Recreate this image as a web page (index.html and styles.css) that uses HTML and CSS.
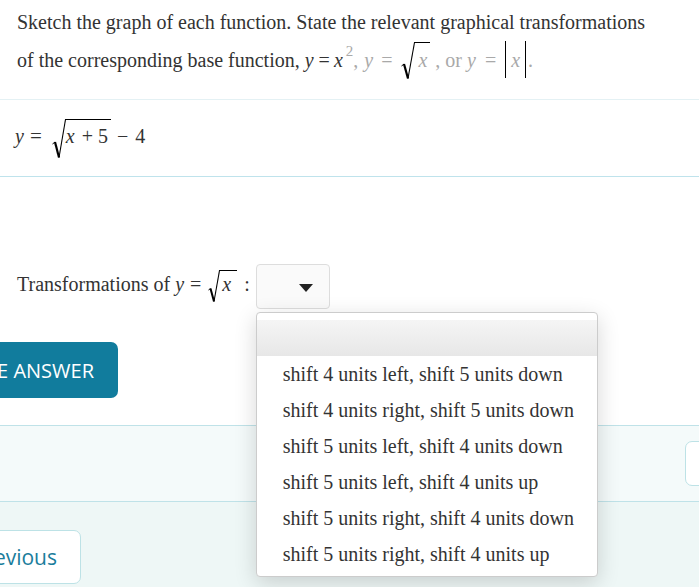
FILE: index.html
```html
<!DOCTYPE html>
<html>
<head>
<meta charset="utf-8">
<link rel="stylesheet" href="styles.css">
</head>
<body>
<div class="page">
  <div class="prompt">
    <p>Sketch the graph of each function. State the relevant graphical transformations</p>
    <p>of the corresponding base function, <i class="v1">y</i><span class="op o1">=</span><i>x</i><span class="fade"><sup>2</sup>, <i class="v2">y</i><span class="op o2">=</span><span class="sqrt s1"><svg class="rad" width="14" height="37" viewBox="0 0 14 37"><path d="M0.5 24 L3 22" stroke="#000" stroke-width="1" fill="none"/><path d="M3 22 L7 36.5" stroke="#000" stroke-width="2.2" fill="none"/><path d="M7 36.5 L13.5 0.5" stroke="#000" stroke-width="1.1" fill="none"/></svg><span class="rc"><i>x</i></span></span> , or <i class="v3">y</i><span class="op o3">=</span><span class="abs"><i>x</i></span>.</span></p>
  </div>

  <div class="expr">
    <i>y</i><span class="op o4">=</span><span class="sqrt s2"><svg class="rad" width="14" height="39" viewBox="0 0 14 39"><path d="M0.5 25 L3 23" stroke="#000" stroke-width="1" fill="none"/><path d="M3 23 L7 38.5" stroke="#000" stroke-width="2.2" fill="none"/><path d="M7 38.5 L13.5 0.5" stroke="#000" stroke-width="1.1" fill="none"/></svg><span class="rc"><i>x</i><span class="op o5">+</span>5</span></span><span class="op o6">−</span>4
  </div>

  <div class="trans">
    <span class="trans-label">Transformations of<i class="tv">y</i><span class="op o7">=</span><span class="sqrt s3"><svg class="rad" width="12" height="32" viewBox="0 0 12 32"><path d="M0.5 20 L2.5 18.5" stroke="#000" stroke-width="1" fill="none"/><path d="M2.5 18.5 L6 31.5" stroke="#000" stroke-width="2" fill="none"/><path d="M6 31.5 L11.5 0.5" stroke="#000" stroke-width="1.1" fill="none"/></svg><span class="rc"><i>x</i></span></span><span class="colon">:</span></span>
    <div class="select-wrap">
      <div class="select"><span class="caret"></span></div>
      <ul class="dropdown">
        <li class="opt opt-empty"></li>
        <li class="opt">shift 4 units left, shift 5 units down</li>
        <li class="opt">shift 4 units right, shift 5 units down</li>
        <li class="opt">shift 5 units left, shift 4 units down</li>
        <li class="opt">shift 5 units left, shift 4 units up</li>
        <li class="opt">shift 5 units right, shift 4 units down</li>
        <li class="opt">shift 5 units right, shift 4 units up</li>
      </ul>
    </div>
  </div>

  <div class="answer-row">
    <button class="btn-answer">SEE THE ANSWER</button>
  </div>

  <div class="band band-1">
    <div class="side-box"></div>
  </div>

  <div class="band band-2">
    <div class="prev-row">
      <button class="btn-prev">Previous</button>
    </div>
  </div>
</div>
</body>
</html>
```

FILE: styles.css
```css
html, body {
  margin: 0;
  padding: 0;
  background: #ffffff;
}

.page {
  width: 699px;
  height: 587px;
  overflow: hidden;
  font-family: "Liberation Serif", "Times New Roman", serif;
  font-size: 20px;
  color: #333333;
}

i {
  font-style: italic;
  font-family: "Liberation Serif", serif;
}

.op {
  display: inline-block;
  font-family: "Liberation Serif", serif;
}

.prompt {
  padding: 3px 17px 20px;
  line-height: 38px;
  border-bottom: 1px solid #e4f1f4;
}

.prompt p {
  margin: 0;
  white-space: nowrap;
}

.v1 { margin-left: 0; }
.o1 { margin: 0 4px 0 5px; }
.v2 { margin-left: 1px; }
.o2 { margin: 0 9px 0 8px; }
.v3 { margin-left: 0; }
.o3 { margin: 0 9px 0 9px; }

.fade {
  color: #a9a9a9;
}

.fade sup {
  font-size: 15px;
  line-height: 0;
  vertical-align: 11px;
  margin-left: 3px;
}

/* radicals */
.sqrt {
  white-space: nowrap;
}

.rad {
  display: inline-block;
  vertical-align: -12px;
}

.rc {
  display: inline-block;
  line-height: 20px;
  border-top: 1px solid #000000;
  margin-left: -1px;
  padding-right: 3px;
  padding-left: 3px;
}

.s1 .rad { vertical-align: -12px; }
.s1 .rc { padding-top: 7px; padding-left: 4px; }

.s2 .rad { vertical-align: -15px; }
.s2 .rc { padding-top: 6px; padding-left: 1px; padding-right: 3px; }

.s3 .rad { vertical-align: -11px; }
.s3 .rc { padding-top: 3px; padding-left: 3px; padding-right: 6px; }

.abs {
  display: inline-block;
  line-height: 20px;
  padding: 9px 5px 8px;
  border-left: 1px solid #000000;
  border-right: 1px solid #000000;
  margin: 0 2px 0 0;
}

.expr {
  padding: 14px 15px 18px;
  line-height: 44px;
  border-bottom: 1px solid #bfe3ec;
}

.o4 { margin: 0 10px 0 6px; font-size: 21px; }
.o5 { margin: 0 5px 0 7px; }
.o6 { margin: 0 7px 0 6px; }

/* transformations row */
.trans {
  display: flex;
  align-items: center;
  margin-top: 87px;
  padding-left: 17px;
}

.trans-label {
  line-height: 38px;
  margin-bottom: 5px;
  margin-right: 6px;
  white-space: nowrap;
}

.tv {
  margin-left: 5px;
}

.o7 { margin: 0 7px 0 6px; }

.colon {
  margin-left: 7px;
}

.select-wrap {
  position: relative;
}

.select {
  box-sizing: border-box;
  width: 74px;
  height: 45px;
  border: 1px solid #dddddd;
  border-radius: 4px;
  background: #fafafa;
  display: flex;
  align-items: center;
  justify-content: flex-end;
  padding-right: 16px;
}

.caret {
  width: 0;
  height: 0;
  border-left: 7px solid transparent;
  border-right: 7px solid transparent;
  border-top: 8px solid #222222;
  margin-top: 2px;
}

.dropdown {
  position: absolute;
  top: 48px;
  left: 0;
  z-index: 10;
  box-sizing: border-box;
  width: 342px;
  margin: 0;
  padding: 7px 0 4px;
  list-style: none;
  background: #ffffff;
  border: 1px solid #cccccc;
  border-radius: 4px;
  box-shadow: 0 6px 22px rgba(0, 0, 0, 0.16);
}

.opt {
  height: 36px;
  line-height: 36px;
  padding-left: 26px;
  white-space: nowrap;
  color: #333333;
}

.opt-empty {
  background: linear-gradient(#f5f5f5, #e7e7e7);
}

/* answer button */
.answer-row {
  width: 118px;
  display: flex;
  justify-content: flex-end;
  margin-top: 33px;
}

.btn-answer {
  flex-shrink: 0;
  height: 56px;
  border: none;
  border-radius: 7px;
  background: #117c9d;
  color: #ffffff;
  font-family: "Open Sans", sans-serif;
  font-size: 20px;
  padding: 0 24px;
  white-space: nowrap;
}

/* bottom bands */
.band {
  border-top: 1px solid #bfe2e8;
}

.band-1 {
  margin-top: 27px;
  background: #f4fafa;
  padding: 15px 0;
  display: flex;
  justify-content: flex-end;
}

.side-box {
  flex-shrink: 0;
  box-sizing: border-box;
  width: 60px;
  height: 45px;
  margin-right: -46px;
  background: #ffffff;
  border: 1px solid #bde2e6;
  border-radius: 7px;
}

.band-2 {
  background: #eef7f6;
  padding-top: 28px;
  height: 100px;
}

.prev-row {
  width: 81px;
  display: flex;
  justify-content: flex-end;
}

.btn-prev {
  flex-shrink: 0;
  height: 54px;
  box-sizing: border-box;
  background: #ffffff;
  border: 1px solid #bde2e6;
  border-radius: 7px;
  color: #1a7d9c;
  font-family: "Open Sans", sans-serif;
  font-size: 21px;
  padding: 0 23px;
  white-space: nowrap;
}
```
